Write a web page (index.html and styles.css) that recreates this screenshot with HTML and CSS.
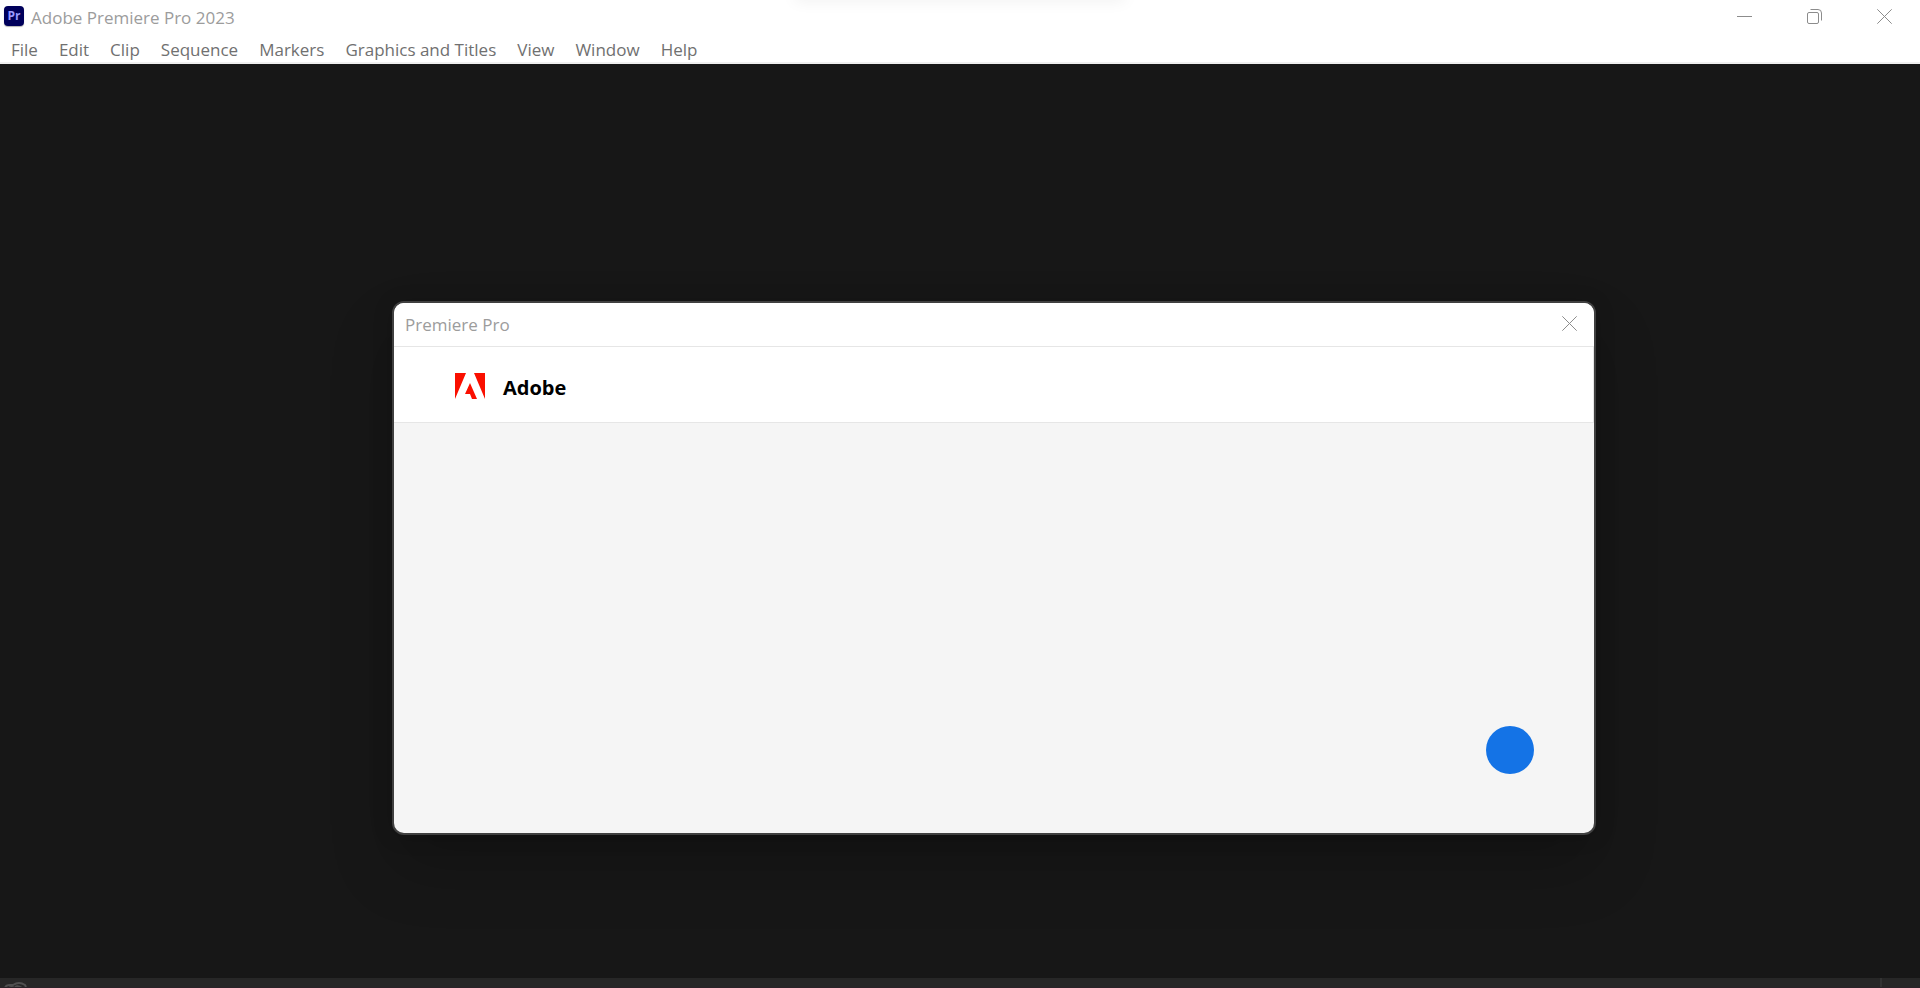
FILE: index.html
```html
<!DOCTYPE html>
<html lang="en">
<head>
<meta charset="utf-8">
<title>Adobe Premiere Pro 2023</title>
<link rel="stylesheet" href="styles.css">
</head>
<body>
<div class="app">
  <header class="chrome">
    <div class="titlebar">
      <div class="app-icon">Pr</div>
      <h1 class="app-title">Adobe Premiere Pro 2023</h1>
      <div class="window-controls">
        <button class="control" aria-label="Minimize"><svg class="glyph" viewBox="0 0 15 15"><path d="M0 7.500h15"/></svg></button>
        <button class="control" aria-label="Restore"><svg class="glyph" viewBox="0 0 15 15"><rect x=".5" y="3.500" width="11" height="11" rx="1.500"/><path d="M3.500.5h7.500a3.500 3.500 0 0 1 3.500 3.500v7.500"/></svg></button>
        <button class="control" aria-label="Close"><svg class="glyph" viewBox="0 0 15 15"><path d="M.3.3l14.400 14.400m0-14.400l-14.400 14.400"/></svg></button>
      </div>
    </div>
    <nav class="menubar">
      <button class="menu">File</button>
      <button class="menu">Edit</button>
      <button class="menu">Clip</button>
      <button class="menu">Sequence</button>
      <button class="menu">Markers</button>
      <button class="menu">Graphics and Titles</button>
      <button class="menu">View</button>
      <button class="menu">Window</button>
      <button class="menu">Help</button>
    </nav>
  </header>
  <main class="workspace"></main>
  <footer class="statusbar">
    <svg class="cloud" viewBox="0 0 24 16"><path d="M1 8q0-4 5-4h3q6-4 12 0 1 1 1 6M4 8q3-4 8 0m-1-2q3-2 7 1"/></svg>
    <span class="divider"></span>
  </footer>
</div>
<section class="dialog" role="dialog" aria-labelledby="dialog-title">
  <div class="dialog-titlebar">
    <h2 class="dialog-title" id="dialog-title">Premiere Pro</h2>
    <button class="dialog-close" aria-label="Close"><svg class="glyph" viewBox="0 0 15 15"><path d="M.3.3l14.400 14.400m0-14.400l-14.400 14.400"/></svg></button>
  </div>
  <div class="brand">
    <svg class="brand-logo" viewBox="0 0 30 26"><path d="M0 0h11L0 26zM19 0h11v26zM15 10l7 16h-5l-2-5h-5z"/></svg>
    <span class="brand-name">Adobe</span>
  </div>
  <div class="dialog-body">
    <button class="action" aria-label="Continue"></button>
  </div>
</section>
</body>
</html>
```
FILE: styles.css
```css
* {
  box-sizing: border-box;
}

body {
  margin: 0;
  font-family: "Open Sans", "Noto Sans", sans-serif;
  font-size: 17px;
  background: #171717;
}

button {
  padding: 0;
  border: 0;
  background: none;
  font: inherit;
  color: inherit;
}

.app {
  display: flex;
  flex-direction: column;
  height: 100vh;
  overflow: hidden;
}

.chrome {
  position: relative;
  overflow: hidden;
  background: #fff;
  border-bottom: 2px solid #f0f0f0;
}

.chrome::before {
  content: "";
  position: absolute;
  top: -10px;
  left: 50%;
  width: 330px;
  height: 10px;
  margin-left: -165px;
  box-shadow: 0 0 16px rgba(0, 0, 0, 0.08);
}

.titlebar {
  display: flex;
  height: 34px;
  padding: 0 1px 0 4px;
}

.app-icon {
  width: 20px;
  height: 20px;
  margin-top: 6px;
  border-radius: 4px;
  background: #00005b;
  box-shadow: 0 1px 1px rgba(0, 0, 0, 0.3);
  color: #9999ff;
  font-size: 12px;
  font-weight: 700;
  line-height: 19px;
  text-align: center;
}

.app-title {
  flex: 1;
  margin: 0 0 0 7px;
  color: #9c9c9c;
  font-size: 17px;
  font-weight: 400;
  line-height: 36px;
}

.window-controls {
  display: flex;
}

.control {
  display: grid;
  place-items: center;
  width: 70px;
  height: 33px;
}

.glyph {
  width: 15px;
  height: 15px;
  fill: none;
  stroke: #8c8c8c;
}

.menubar {
  display: flex;
  gap: 21px;
  height: 28px;
  padding-left: 11px;
}

.menu {
  color: #707070;
  line-height: 32px;
}

.workspace {
  flex: 1;
  background: #171717;
}

.statusbar {
  display: flex;
  justify-content: space-between;
  height: 10px;
  padding: 0 38px 0 4px;
  overflow: hidden;
  background: #272727;
  border-bottom: 1px solid #2b2329;
}

.cloud {
  width: 24px;
  height: 16px;
  margin-top: 3px;
  fill: none;
  stroke: #505050;
  stroke-width: 2;
}

.divider {
  width: 2px;
  background: #333;
}

.dialog {
  position: absolute;
  top: 301px;
  left: 392px;
  display: flex;
  flex-direction: column;
  width: 1204px;
  height: 534px;
  overflow: hidden;
  border: 2px solid #404040;
  border-radius: 12px;
  background: #f5f5f5;
  box-shadow: 0 32px 64px rgba(0, 0, 0, 0.2), 0 2px 20px rgba(0, 0, 0, 0.15);
}

.dialog-titlebar {
  display: flex;
  justify-content: space-between;
  height: 44px;
  padding: 0 17px 0 11px;
  border-bottom: 1px solid #e6e6e6;
  background: #fff;
}

.dialog-title {
  margin: 0;
  color: #9c9c9c;
  font-size: 17px;
  font-weight: 400;
  line-height: 43px;
}

.dialog-close {
  display: grid;
  place-items: center;
  height: 41px;
}

.brand {
  display: flex;
  align-items: center;
  gap: 18px;
  height: 76px;
  padding: 3px 61px 0;
  border-right: 1px solid #e6e6e6;
  border-bottom: 1px solid #e6e6e6;
  background: #fff;
}

.brand-logo {
  width: 30px;
  height: 26px;
  fill: #fa0f00;
}

.brand-name {
  padding-top: 3px;
  color: #000;
  font-size: 20px;
  font-weight: 700;
  line-height: 28px;
}

.dialog-body {
  display: flex;
  flex: 1;
  align-items: flex-end;
  justify-content: flex-end;
  padding: 59px 60px;
}

.action {
  width: 48px;
  height: 48px;
  border-radius: 50%;
  background: #1473e6;
}
```
